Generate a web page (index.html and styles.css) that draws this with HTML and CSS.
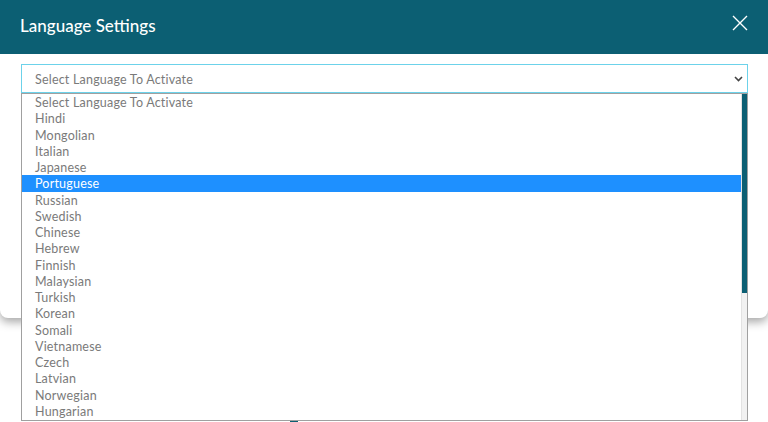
FILE: index.html
```
<!DOCTYPE html>
<html lang="en">
<head>
    <meta charset="UTF-8">
    <meta name="viewport" content="width=device-width, initial-scale=1.0">
    <title>Language Settings</title>
    <link rel="stylesheet" href="styles.css">
</head>
<body>
    <div class="modal">
        <div class="modal-header">
            <h1 class="modal-title">Language Settings</h1>
            <button class="close" aria-label="Close">
                <svg width="16" height="16" viewBox="0 0 16 16">
                    <path d="M1 1 L15 15 M15 1 L1 15" stroke="#fff" stroke-width="1.4" fill="none"/>
                </svg>
            </button>
        </div>
        <div class="modal-body">
            <div class="select-wrap">
                <div class="select">
                    <span class="select-value">Select Language To Activate</span>
                    <svg class="chevron" width="9" height="6" viewBox="0 0 9 6">
                        <path d="M1 1 L4.5 4.5 L8 1" stroke="#444" stroke-width="1.6" fill="none"/>
                    </svg>
                </div>
                <div class="dropdown">
                    <ul class="options">
                        <li>Select Language To Activate</li>
                        <li>Hindi</li>
                        <li>Mongolian</li>
                        <li>Italian</li>
                        <li>Japanese</li>
                        <li class="active">Portuguese</li>
                        <li>Russian</li>
                        <li>Swedish</li>
                        <li>Chinese</li>
                        <li>Hebrew</li>
                        <li>Finnish</li>
                        <li>Malaysian</li>
                        <li>Turkish</li>
                        <li>Korean</li>
                        <li>Somali</li>
                        <li>Vietnamese</li>
                        <li>Czech</li>
                        <li>Latvian</li>
                        <li>Norwegian</li>
                        <li>Hungarian</li>
                    </ul>
                    <div class="scrollbar"><div class="thumb"></div></div>
                </div>
            </div>
        </div>
    </div>
    <div class="page">
        <span class="page-btn"></span>
    </div>
</body>
</html>
```

FILE: styles.css
```
* {
    margin: 0;
    padding: 0;
    box-sizing: border-box;
    font-family: Lato, "Open Sans", sans-serif;
}

body {
    background: #fff;
    width: 768px;
    height: 422px;
    overflow: hidden;
}

.modal {
    background: #fff;
    border-radius: 0 0 8px 8px;
    box-shadow: 0 4px 10px rgba(0,0,0,0.35);
}

.modal-header {
    height: 54px;
    background: #0c5f73;
    display: flex;
    align-items: center;
    justify-content: space-between;
    padding: 0 20px 4px 20px;
}

.modal-title {
    color: #fff;
    font-size: 17px;
    font-weight: 500;
}

.close {
    background: none;
    border: none;
    width: 16px;
    height: 16px;
    margin-top: -4px;
    cursor: pointer;
}

.modal-body {
    height: 264px;
    padding: 10px 20px 0 21px;
}

.select-wrap {
    position: relative;
    width: 727px;
}

.select {
    height: 29px;
    border: 1px solid #6cd2ea;
    display: flex;
    align-items: center;
    justify-content: space-between;
    padding: 1px 4px 0 13px;
}

.select-value {
    font-size: 12.5px;
    letter-spacing: 0.2px;
    color: #7a7a7a;
}

.dropdown {
    position: absolute;
    top: 29px;
    left: 0;
    width: 727px;
    height: 328px;
    background: #fff;
    border: 1px solid #a0a0a0;
    display: flex;
    z-index: 10;
}

.options {
    list-style: none;
    flex: 1;
}

.options li {
    height: 16.25px;
    line-height: 17px;
    padding-left: 13px;
    font-size: 12.5px;
    letter-spacing: 0.2px;
    color: #7a7a7a;
}

.options li.active {
    background: #1e90ff;
    color: #fff;
}

.scrollbar {
    width: 6px;
    background: #f1f1f1;
    border-left: 1px solid #e2e2e2;
}

.thumb {
    height: 199px;
    background: #0c5f73;
}

.page {
    height: 104px;
    position: relative;
}

.page-btn {
    position: absolute;
    left: 290px;
    bottom: 0;
    width: 8px;
    height: 2px;
    background: #0c5f73;
}
```
